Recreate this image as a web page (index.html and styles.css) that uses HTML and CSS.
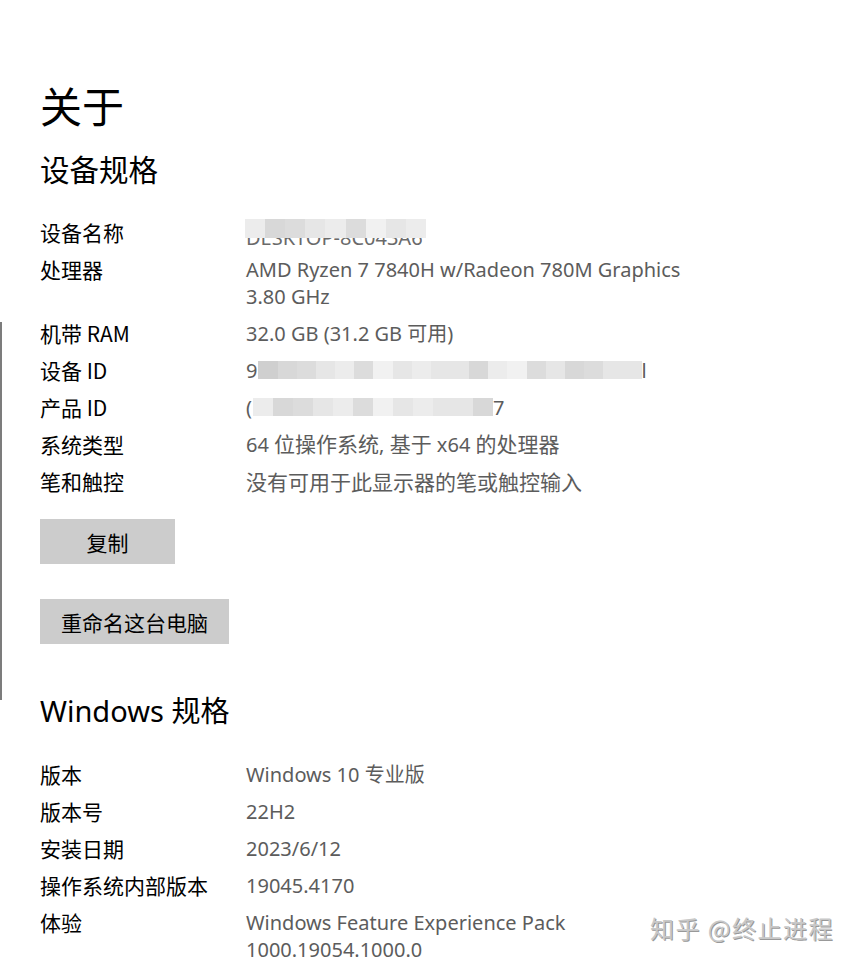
FILE: index.html
```html
<!DOCTYPE html>
<html lang="zh-CN">
<head>
<meta charset="utf-8">
<title>关于</title>
<link rel="stylesheet" href="styles.css">
</head>
<body>
<div class="edge"></div>
<main class="page">
  <h1 class="title">关于</h1>
  <h2 class="section">设备规格</h2>
  <dl class="specs">
    <dt>设备名称</dt>
    <dd class="masked-name"><span class="under">DESKTOP-8C043A6</span><span class="mosaic m-name"><i></i><i></i><i></i><i></i><i></i><i></i><i></i><i></i><i></i></span></dd>
    <dt>处理器</dt>
    <dd>AMD Ryzen 7 7840H w/Radeon 780M Graphics<br>3.80 GHz</dd>
    <dt>机带 RAM</dt>
    <dd>32.0 GB (31.2 GB 可用)</dd>
    <dt>设备 ID</dt>
    <dd class="masked"><span>9</span><span class="mosaic m-id"><i></i><i></i><i></i><i></i><i></i><i></i><i></i><i></i><i></i><i></i><i></i><i></i><i></i><i></i><i></i><i></i><i></i><i></i><i></i><i></i></span><span class="tail">l</span></dd>
    <dt>产品 ID</dt>
    <dd class="masked"><span>(</span><span class="mosaic m-pid"><i></i><i></i><i></i><i></i><i></i><i></i><i></i><i></i><i></i><i></i><i></i><i></i></span><span>7</span></dd>
    <dt>系统类型</dt>
    <dd>64 <span class="cjk">位操作系统</span>, <span class="cjk">基于</span> x64 <span class="cjk">的处理器</span></dd>
    <dt>笔和触控</dt>
    <dd class="cjk-line">没有可用于此显示器的笔或触控输入</dd>
  </dl>
  <div class="actions">
    <button class="btn btn-copy" type="button">复制</button>
    <button class="btn btn-rename" type="button">重命名这台电脑</button>
  </div>
  <h2 class="section section-win">Windows 规格</h2>
  <dl class="specs specs-win">
    <dt>版本</dt>
    <dd>Windows 10 专业版</dd>
    <dt>版本号</dt>
    <dd>22H2</dd>
    <dt>安装日期</dt>
    <dd>2023/6/12</dd>
    <dt>操作系统内部版本</dt>
    <dd>19045.4170</dd>
    <dt>体验</dt>
    <dd>Windows Feature Experience Pack<br>1000.19054.1000.0</dd>
  </dl>
</main>
<div class="watermark">知乎 @终止进程</div>
</body>
</html>
```
FILE: styles.css
```css
html, body {
  margin: 0;
  padding: 0;
  background: #ffffff;
}
body {
  width: 856px;
  height: 964px;
  overflow: hidden;
  position: relative;
  font-family: "Noto Sans", "Noto Sans CJK SC", sans-serif;
  color: #000;
}
.edge {
  position: absolute;
  left: 0;
  top: 322px;
  width: 2px;
  height: 378px;
  background: #7c7c7c;
}
.page {
  padding: 77px 0 0 40px;
}
.title {
  margin: 0;
  font-family: "Noto Sans CJK SC", sans-serif;
  font-weight: 400;
  font-size: 42px;
  line-height: 56px;
}
.section {
  margin: 17px 0 0;
  font-weight: 400;
  font-size: 29.5px;
  line-height: 40px;
  font-family: "Noto Sans", "Noto Sans CJK SC", sans-serif;
}
.specs {
  display: grid;
  grid-template-columns: 206px auto;
  grid-auto-rows: minmax(27px, auto);
  row-gap: 10px;
  margin: 28.5px 0 0;
  font-size: 20px;
  line-height: 27px;
}
.specs dt {
  font-family: "Noto Sans CJK SC", sans-serif;
  font-size: 21px;
  color: #000;
}
.specs dd {
  margin: 0;
  color: #5c5c5c;
  white-space: nowrap;
}
.specs .cjk {
  font-family: "Noto Sans CJK SC", sans-serif;
  font-size: 21px;
  line-height: 1;
}
.specs .cjk-line {
  font-family: "Noto Sans CJK SC", sans-serif;
  font-size: 21px;
}
.masked, .masked-name {
  display: flex;
  align-items: center;
}
.masked-name {
  position: relative;
}
.masked-name .under {
  color: #6a6a6a;
  transform: translateY(5px);
  clip-path: inset(9px 0 0 0);
}
.mosaic {
  display: flex;
  height: 18px;
}
.mosaic i {
  flex: 1;
  background: #e6e6e6;
}
.mosaic i:nth-child(3n) { background: #dcdcdc; }
.mosaic i:nth-child(4n+1) { background: #ececec; }
.mosaic i:nth-child(5n+2) { background: #d8d8d8; }
.mosaic i:nth-child(7n) { background: #f1f1f1; }
.m-name {
  position: absolute;
  left: -1px;
  top: 0;
  width: 181px;
  height: 19px;
}
.m-id {
  width: 383px;
  margin-left: 1px;
}
.m-id i:first-child { background: #cfcfcf; }
.m-pid {
  width: 240px;
  margin-left: 1px;
}
.actions {
  display: flex;
  flex-direction: column;
  align-items: flex-start;
  gap: 35px;
  margin-top: 24.5px;
}
.btn {
  height: 45px;
  border: 0;
  padding: 0;
  background: #cccccc;
  color: #000;
  font-family: "Noto Sans CJK SC", sans-serif;
  font-size: 21px;
}
.btn-copy { width: 135px; }
.btn-rename { width: 189px; }
.section-win {
  margin-top: 47px;
  font-size: 29px;
}
.specs-win {
  margin-top: 29.5px;
}
.watermark {
  position: absolute;
  right: 22px;
  top: 912px;
  font-family: "Noto Sans CJK SC", sans-serif;
  font-size: 24px;
  line-height: 32px;
  color: #c8c8c8;
  text-shadow: 1px 1px 0 #999;
  letter-spacing: 1.5px;
}
```
